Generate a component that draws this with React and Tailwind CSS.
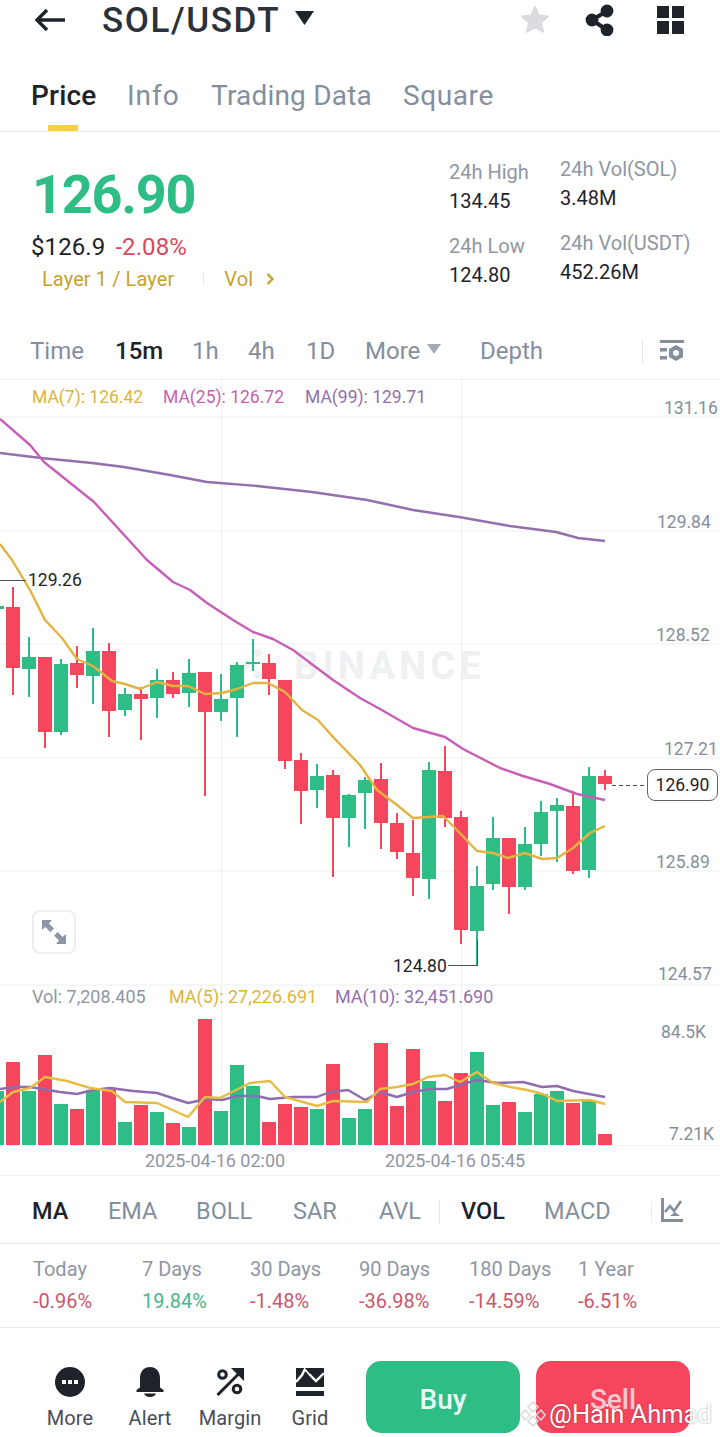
import React from "react";

const GREEN = "#2ebd85";
const RED = "#f6465d";

// [x-index, up?, wickTop, wickBottom, bodyTop, bodyBottom, volumeTop]
const candles = [
  [-1, 1, 600, 612, 606, 609, 1091],
  [0, 0, 587, 695, 607, 668, 1062],
  [1, 1, 637, 697, 657, 669, 1091],
  [2, 0, 657, 748, 657, 732, 1055],
  [3, 1, 659, 735, 664, 732, 1104],
  [4, 0, 646, 688, 663, 675, 1109],
  [5, 1, 628, 704, 651, 676, 1090],
  [6, 0, 643, 737, 651, 711, 1089],
  [7, 1, 688, 716, 694, 710, 1122],
  [8, 0, 687, 740, 694, 699, 1105],
  [9, 1, 669, 718, 680, 698, 1112],
  [10, 0, 672, 698, 680, 694, 1123],
  [11, 1, 659, 707, 673, 693, 1127],
  [12, 0, 672, 796, 672, 712, 1019],
  [13, 1, 674, 721, 699, 712, 1111],
  [14, 1, 662, 737, 665, 698, 1065],
  [15, 1, 639, 671, 662, 664, 1086],
  [16, 0, 654, 695, 663, 679, 1122],
  [17, 0, 680, 769, 680, 761, 1104],
  [18, 0, 753, 824, 760, 791, 1107],
  [19, 1, 764, 808, 776, 790, 1109],
  [20, 0, 770, 877, 775, 818, 1064],
  [21, 1, 794, 847, 795, 818, 1118],
  [22, 1, 777, 829, 780, 793, 1109],
  [23, 0, 763, 849, 779, 823, 1043],
  [24, 0, 813, 859, 823, 852, 1106],
  [25, 0, 820, 896, 853, 878, 1049],
  [26, 1, 762, 899, 770, 879, 1081],
  [27, 0, 746, 827, 771, 818, 1101],
  [28, 0, 811, 944, 817, 930, 1073],
  [29, 1, 866, 966, 886, 931, 1052],
  [30, 1, 817, 890, 838, 884, 1105],
  [31, 0, 838, 914, 838, 887, 1102],
  [32, 1, 827, 890, 844, 887, 1112],
  [33, 1, 801, 856, 812, 844, 1094],
  [34, 1, 798, 862, 805, 811, 1091],
  [35, 0, 791, 874, 806, 871, 1103],
  [36, 1, 767, 878, 776, 870, 1101],
  [37, 0, 770, 790, 776, 784, 1134],
];

const ma7 = "0,544 12,560 30,590 45,620 62,638 77,659 93,666 112,681 125,684 140,689 157,682 173,686 188,686 205,694 222,693 237,689 253,683 268,683 285,692 302,710 318,720 333,737 360,765 377,790 397,805 413,818 443,816 457,830 477,851 493,853 508,858 525,853 542,859 557,858 573,848 590,833 605,826";
const ma25 = "0,419 30,445 44,462 94,502 147,560 173,582 190,590 207,603 233,620 253,632 273,639 293,650 313,665 333,680 360,698 380,709 413,728 445,737 463,749 500,768 523,776 550,784 577,794 605,800";
const ma99 = "0,453 41,458 92,463 124,467 170,475 207,482 257,486 312,492 367,500 413,510 459,517 510,526 556,532 578,538 605,541";
const volMa5 = "0,1102 13,1092 30,1088 45,1077 67,1081 90,1088 112,1091 125,1102 157,1103 188,1117 205,1097 220,1098 250,1083 270,1081 285,1097 317,1106 333,1101 367,1102 380,1089 397,1087 413,1084 428,1077 445,1075 460,1082 477,1072 493,1083 510,1087 527,1090 543,1094 557,1101 590,1100 605,1104";
const volMa10 = "0,1089 15,1087 30,1087 60,1092 77,1094 93,1090 110,1088 133,1091 157,1093 188,1103 207,1099 222,1100 237,1096 257,1096 270,1099 293,1097 317,1097 330,1092 348,1090 360,1097 365,1100 380,1092 397,1097 413,1092 430,1089 447,1089 463,1084 477,1080 497,1083 523,1082 542,1087 557,1086 573,1091 605,1097";

const priceLabels = [
  ["131.16", 407, 664],
  ["129.84", 521, 657],
  ["128.52", 634, 656],
  ["127.21", 748, 664],
  ["125.89", 861, 656],
  ["124.57", 973, 658],
  ["84.5K", 1031, 661],
  ["7.21K", 1133, 669],
];

const stats = [
  ["Today", "-0.96%", 33, false],
  ["7 Days", "19.84%", 142, true],
  ["30 Days", "-1.48%", 250, false],
  ["90 Days", "-36.98%", 359, false],
  ["180 Days", "-14.59%", 469, false],
  ["1 Year", "-6.51%", 578, false],
];

function ChartDrawing() {
  return (
    <svg className="absolute left-0 top-0" width="720" height="795" viewBox="0 380 720 795">
      {[417, 531, 644, 758, 871].map((y) => (
        <line key={y} x1="0" x2="720" y1={y} y2={y} stroke="#eeeff1" />
      ))}
      <line x1="0" x2="720" y1="985" y2="985" stroke="#eeeff1" />
      <line x1="0" x2="720" y1="1145.5" y2="1145.5" stroke="#eeeff1" />
      <line x1="221.5" x2="221.5" y1="380" y2="1145" stroke="#eeeff1" />
      <line x1="461.5" x2="461.5" y1="380" y2="1145" stroke="#eeeff1" />

      {/* watermark */}
      <g fill="#eef0f1">
        <path d="M258 648l5 5-5 5-5-5zM247 659l5 5-5 5-5-5zM269 659l5 5-5 5-5-5zM258 670l5 5-5 5-5-5z" />
      </g>
      <text x="294" y="679" fontSize="38" fontWeight="700" fill="#eef0f1" fontFamily="Roboto, sans-serif" letterSpacing="4.3">
        BINANCE
      </text>

      {candles.map(([k, up, wt, wb, bt, bb, vt]) => {
        const x = 13 + k * 16;
        const color = up ? GREEN : RED;
        return (
          <g key={k} fill={color}>
            <rect x={x - 1} y={wt} width="2" height={wb - wt} />
            <rect x={x - 7} y={bt} width="14" height={bb - bt} />
            <rect x={x - 7} y={vt} width="14" height={1145 - vt} />
          </g>
        );
      })}

      <polyline points={ma99} fill="none" stroke="#9170ad" strokeWidth="2.4" strokeLinejoin="round" />
      <polyline points={ma25} fill="none" stroke="#c65fb5" strokeWidth="2.4" strokeLinejoin="round" />
      <polyline points={ma7} fill="none" stroke="#e3b341" strokeWidth="2.4" strokeLinejoin="round" />
      <polyline points={volMa10} fill="none" stroke="#8f6bb0" strokeWidth="2.4" strokeLinejoin="round" />
      <polyline points={volMa5} fill="none" stroke="#e6bc45" strokeWidth="2.4" strokeLinejoin="round" />

      {/* high, low and last price leaders */}
      <line x1="0" x2="26" y1="580.5" y2="580.5" stroke="#4a5058" />
      <path d="M448 965.5h29.5V940" fill="none" stroke="#4a5058" />
      <line x1="612" x2="646" y1="785.5" y2="785.5" stroke="#4a5058" strokeDasharray="4 3" />
    </svg>
  );
}

function FooterAction({ label, children }) {
  return (
    <div className="flex w-[80px] flex-col items-center">
      <div className="mt-[5px] flex h-[32px] items-center text-[#1e2329]">{children}</div>
      <span className="mt-[7px] text-[20px] leading-[26px] tracking-[0.1px] text-[#474d57]">{label}</span>
    </div>
  );
}

export default function App() {
  return (
    <div className="relative h-[1437px] w-[720px] overflow-hidden bg-white font-['Roboto',sans-serif]">
      {/* Top bar */}
      <div className="flex h-[42px] items-center pl-[34px] pr-[36px] text-[#1e2329]">
        <svg className="mb-[3px]" width="32" height="26" viewBox="0 0 32 26" fill="none" stroke="currentColor" strokeWidth="3.4">
          <path d="M31 13H3M13 3L3 13l10 10" />
        </svg>
        <h1 className="ml-[36px] text-[35px] font-medium tracking-[1.6px] text-[#2b3139]">SOL/USDT</h1>
        <svg className="mb-[6px] ml-[15px]" width="19" height="14" viewBox="0 0 19 14" fill="currentColor">
          <path d="M0 0h19L9.500 14z" />
        </svg>
        <div className="mb-[3px] ml-auto flex items-center">
          <svg className="text-[#d9dbdf]" width="32" height="32" viewBox="0 0 32 32" fill="currentColor" stroke="currentColor" strokeWidth="2" strokeLinejoin="round">
            <path d="M16 3l3.800 8.600 9.200.9-7 6.100 2.100 9.200L16 23l-8.100 4.800L10 18.600l-7-6.100 9.200-.9z" />
          </svg>
          <svg className="ml-[34px]" width="30" height="32" viewBox="0 0 30 32" fill="currentColor">
            <circle cx="22" cy="7" r="6.400" />
            <circle cx="22" cy="26" r="6.400" />
            <circle cx="7" cy="16" r="6.400" />
            <path d="M7 16L22 7M7 16l15 10" stroke="currentColor" strokeWidth="4" />
          </svg>
          <div className="ml-[42px] grid h-[28px] w-[27px] grid-cols-2 gap-[3px]">
            <div className="bg-[#1e2329]" />
            <div className="bg-[#1e2329]" />
            <div className="bg-[#1e2329]" />
            <div className="bg-[#1e2329]" />
          </div>
        </div>
      </div>

      {/* Tabs */}
      <div className="relative flex h-[90px] border-b border-[#eaecef] pl-[31px] pt-[35px] text-[28px] leading-[38px] tracking-[0.2px] text-[#848e9c]">
        <span className="w-[96px] font-medium text-[#1e2329]">Price</span>
        <span className="w-[84px] tracking-[1px]">Info</span>
        <span className="w-[192px]">Trading Data</span>
        <span className="tracking-[0.6px]">Square</span>
        <div className="absolute bottom-0 left-[48px] h-[6px] w-[30px] bg-[#f4cf3f]" />
      </div>

      {/* Price summary */}
      <div className="flex h-[198px]">
        <div className="w-[449px] pl-[31px]">
          <div className="mt-[30px] pl-[1px] text-[54px] font-bold leading-[66px] tracking-[-1.2px] text-[#2ebd85]">126.90</div>
          <div className="mt-[3px] flex text-[24px] leading-[32px]">
            <span className="tracking-[0.1px] text-[#1e2329]">$126.9</span>
            <span className="ml-[10px] tracking-[0.1px] text-[#d9485f]">-2.08%</span>
          </div>
          <div className="mt-[2px] flex items-center pl-[11px] text-[20px] leading-[28px] tracking-[0.1px] text-[#c99f2c]">
            <span>Layer 1 / Layer</span>
            <span className="ml-[29px] h-[12px] w-px bg-[#e5e7eb]" />
            <span className="ml-[20px]">Vol</span>
            <svg className="ml-[13px]" width="9" height="12" viewBox="0 0 9 12" fill="none" stroke="currentColor" strokeWidth="2.400">
              <path d="M1.500 1l5 5-5 5" />
            </svg>
          </div>
        </div>
        <div className="flex text-[20px] leading-[28px]">
          <div className="w-[111px] pt-[26px]">
            <div className="text-[#8f96a3]">24h High</div>
            <div className="mt-[1px] text-[#1e2329]">134.45</div>
            <div className="mt-[17px] text-[#8f96a3]">24h Low</div>
            <div className="mt-[1px] text-[#1e2329]">124.80</div>
          </div>
          <div className="pt-[23px]">
            <div className="text-[#8f96a3]">24h Vol(SOL)</div>
            <div className="mt-[1px] text-[#1e2329]">3.48M</div>
            <div className="mt-[17px] text-[#8f96a3]">24h Vol(USDT)</div>
            <div className="mt-[1px] text-[#1e2329]">452.26M</div>
          </div>
        </div>
      </div>

      {/* Intervals */}
      <div className="flex h-[50px] items-center border-b border-[#eeeff1] pb-[8px] pl-[30px] pr-[36px] text-[24px] text-[#848e9c]">
        <span className="w-[85px]">Time</span>
        <span className="w-[77px] font-medium text-[#1e2329]">15m</span>
        <span className="w-[56px]">1h</span>
        <span className="w-[58px]">4h</span>
        <span className="w-[59px]">1D</span>
        <span className="w-[54px]">More</span>
        <svg className="mb-[3px] ml-[8px]" width="14" height="10" viewBox="0 0 14 10" fill="#a5abb5">
          <path d="M0 0h14L7 10z" />
        </svg>
        <span className="ml-[39px]">Depth</span>
        <div className="ml-auto h-[24px] w-px bg-[#e6e8ea]" />
        <svg className="ml-[17px]" width="24" height="22" viewBox="0 0 24 22" fill="#848e9c">
          <rect x="0" y="0" width="24" height="3" />
          <rect x="0" y="8" width="7" height="3.500" />
          <rect x="0" y="16" width="7" height="3.500" />
          <path
            fillRule="evenodd"
            d="M16 5l7 4v8l-7 4-7-4V9zM16 10a3 3 0 100 6 3 3 0 000-6z"
          />
        </svg>
      </div>

      {/* Chart */}
      <div className="relative h-[796px] border-b border-[#eeeff1] text-[17.5px] leading-[24px]">
        <ChartDrawing />
        <div className="absolute left-[32px] top-[5px] flex">
          <span className="w-[131px] text-[#dcb43a]">MA(7): 126.42</span>
          <span className="w-[142px] text-[#c75fb2]">MA(25): 126.72</span>
          <span className="text-[#9170ad]">MA(99): 129.71</span>
        </div>
        <div className="absolute left-[32px] top-[605px] flex text-[18px]">
          <span className="w-[137px] text-[#8f96a3]">Vol: 7,208.405</span>
          <span className="w-[166px] text-[#dcb43a]">MA(5): 27,226.691</span>
          <span className="text-[#9170ad]">MA(10): 32,451.690</span>
        </div>
        {priceLabels.map(([text, y, x]) => (
          <span key={text} className="absolute text-[#848e9c]" style={{ left: x, top: y - 380 - 12 + 1 }}>
            {text}
          </span>
        ))}
        <span className="absolute left-[28px] top-[188px] text-[#1e2329]">129.26</span>
        <span className="absolute left-[393px] top-[574px] text-[#1e2329]">124.80</span>
        <div className="absolute left-[647px] top-[389px] flex h-[32px] w-[71px] items-center justify-center rounded-[8px] border border-[#5e6570] bg-white text-[#1e2329]">
          126.90
        </div>
        <div className="absolute left-[32px] top-[530px] flex h-[44px] w-[44px] items-center justify-center rounded-[8px] border-2 border-[#eceef0] bg-white">
          <svg width="26" height="26" viewBox="0 0 26 26" fill="#8f96a3">
            <path d="M1 1h10L8 4.400l5 5-3.600 3.600-5-5L1 11zM25 25H15l3-3.400-5-5 3.600-3.600 5 5L25 15z" />
          </svg>
        </div>
        <span className="absolute left-[145px] top-[769px] text-[18px] text-[#8f96a3]">2025-04-16 02:00</span>
        <span className="absolute left-[385px] top-[769px] text-[18px] text-[#8f96a3]">2025-04-16 05:45</span>
      </div>

      {/* Indicators */}
      <div className="flex h-[68px] items-center border-b border-[#eaecef] pt-[4px] pl-[32px] text-[23.5px] text-[#848e9c]">
        <span className="w-[76px] font-medium text-[#1e2329]">MA</span>
        <span className="w-[88px]">EMA</span>
        <span className="w-[97px]">BOLL</span>
        <span className="w-[86px]">SAR</span>
        <span className="w-[60px]">AVL</span>
        <div className="mr-[21px] h-[24px] w-px bg-[#e6e8ea]" />
        <span className="w-[83px] font-medium text-[#1e2329]">VOL</span>
        <span className="w-[107px]">MACD</span>
        <div className="h-[20px] w-px bg-[#e6e8ea]" />
        <svg className="mb-[4px] ml-[9px]" width="22" height="24" viewBox="0 0 22 24" fill="none" stroke="#848e9c" strokeWidth="3">
          <path d="M1.500 0v22.500H22" />
          <path d="M4 14l5-6 4 5 7-10" strokeWidth="2.600" />
          <path d="M9 18l5-4 5 4z" fill="#848e9c" stroke="none" />
        </svg>
      </div>

      {/* Returns */}
      <div className="relative h-[84px] border-b border-[#eaecef] text-[20px] leading-[28px]">
        {stats.map(([label, value, x, up]) => (
          <div key={label} className="absolute top-[11px]" style={{ left: x }}>
            <div className="text-[#8f96a3]">{label}</div>
            <div className={up ? "mt-[4px] text-[#45b58c]" : "mt-[4px] text-[#c9576b]"}>{value}</div>
          </div>
        ))}
      </div>

      {/* Actions */}
      <div className="flex pl-[30px] pt-[33px]">
        <FooterAction label="More">
          <svg width="30" height="30" viewBox="0 0 30 30">
            <circle cx="15" cy="15" r="15" fill="#1e2329" />
            <rect x="7" y="13" width="4" height="4" fill="#fff" />
            <rect x="13" y="13" width="4" height="4" fill="#fff" />
            <rect x="19" y="13" width="4" height="4" fill="#fff" />
          </svg>
        </FooterAction>
        <FooterAction label="Alert">
          <svg width="28" height="30" viewBox="0 0 28 30" fill="#1e2329">
            <path d="M14 0c6 0 10 4.500 10 11v9.500l3.500 2.500V25H.5v-2L4 20.500V11C4 4.500 8 0 14 0z" />
            <path d="M8 26.500h12c-.6 2.300-3 3.500-6 3.500s-5.400-1.200-6-3.500z" />
          </svg>
        </FooterAction>
        <FooterAction label="Margin">
          <svg width="28" height="28" viewBox="0 0 28 28" fill="none" stroke="#1e2329" strokeWidth="3">
            <circle cx="6.500" cy="6.500" r="3.800" />
            <path d="M1.500 27L24 4.500" />
            <path d="M15 0h13v13z" fill="#1e2329" stroke="none" />
            <circle cx="21" cy="21" r="3.800" />
          </svg>
        </FooterAction>
        <FooterAction label="Grid">
          <svg width="28" height="28" viewBox="0 0 28 28" fill="#1e2329">
            <path d="M0 0h28v19H0z" />
            <path d="M0 23h28v5H0z" />
            <path d="M0 14l6-7 3-6 6 7 5 5 8-8" fill="none" stroke="#fff" strokeWidth="2.400" />
            <path d="M9 0l5 6 5-6zM0 0h5L0 5zM28 0h-5l5 5z" fill="#1e2329" />
          </svg>
        </FooterAction>
        <button className="ml-[16px] h-[72px] w-[154px] rounded-[15px] bg-[#2ebd85] pt-[5px] text-[28px] font-medium text-[#e9fbf4]">
          Buy
        </button>
        <button className="ml-[16px] h-[72px] w-[154px] rounded-[15px] bg-[#f6465d] pt-[5px] text-[28px] font-medium text-[#f9c9d0]">
          Sell
        </button>
      </div>

      {/* Post watermark over the buttons */}
      <div className="absolute left-[520px] top-[1399px] flex items-center text-[25.5px] leading-[30px] text-white [text-shadow:0_0_2px_rgba(0,0,0,0.45)]">
        <svg width="26" height="26" viewBox="0 0 26 26" fill="none" stroke="#d8dade" strokeWidth="1.500">
          <path d="M13 1l5 5-5 5-5-5zM5 9l5 5-5 5-4-5zM21 9l4 5-4 5-5-5zM13 15l5 5-5 5-5-5z" />
        </svg>
        <span className="ml-[3px]">@Hain Ahmad</span>
      </div>
    </div>
  );
}
